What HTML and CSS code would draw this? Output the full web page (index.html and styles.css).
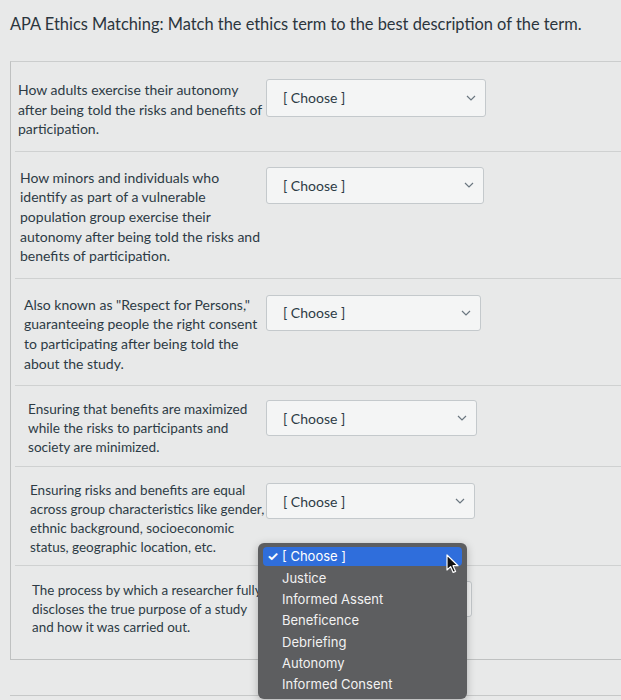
FILE: index.html
```html
<!DOCTYPE html>
<html>
<head>
<meta charset="utf-8">
<link rel="stylesheet" href="styles.css">
</head>
<body>
<div class="page">
  <h1 class="title">APA Ethics Matching: Match the ethics term to the best description of the term.</h1>
  <div class="box">
    <div class="row r1">
      <div class="desc">How adults exercise their autonomy after being told the risks and benefits of participation.</div>
      <div class="select"><span>[ Choose ]</span><svg class="chev" width="10" height="6" viewBox="0 0 10 6"><path d="M1 1l4 4 4-4" fill="none" stroke="#6b7780" stroke-width="1.2"/></svg></div>
    </div>
    <div class="row r2">
      <div class="desc">How minors and individuals who identify as part of a vulnerable population group exercise their autonomy after being told the risks and benefits of participation.</div>
      <div class="select"><span>[ Choose ]</span><svg class="chev" width="10" height="6" viewBox="0 0 10 6"><path d="M1 1l4 4 4-4" fill="none" stroke="#6b7780" stroke-width="1.2"/></svg></div>
    </div>
    <div class="row r3">
      <div class="desc">Also known as "Respect for Persons," guaranteeing people the right consent to participating after being told the about the study.</div>
      <div class="select"><span>[ Choose ]</span><svg class="chev" width="10" height="6" viewBox="0 0 10 6"><path d="M1 1l4 4 4-4" fill="none" stroke="#6b7780" stroke-width="1.2"/></svg></div>
    </div>
    <div class="row r4">
      <div class="desc">Ensuring that benefits are maximized while the risks to participants and society are minimized.</div>
      <div class="select"><span>[ Choose ]</span><svg class="chev" width="10" height="6" viewBox="0 0 10 6"><path d="M1 1l4 4 4-4" fill="none" stroke="#6b7780" stroke-width="1.2"/></svg></div>
    </div>
    <div class="row r5">
      <div class="desc">Ensuring risks and benefits are equal across group characteristics like gender, ethnic background, socioeconomic status, geographic location, etc.</div>
      <div class="select"><span>[ Choose ]</span><svg class="chev" width="10" height="6" viewBox="0 0 10 6"><path d="M1 1l4 4 4-4" fill="none" stroke="#6b7780" stroke-width="1.2"/></svg></div>
    </div>
    <div class="row r6">
      <div class="desc">The process by which a researcher fully discloses the true purpose of a study and how it was carried out.</div>
      <div class="select"><span>[ Choose ]</span><svg class="chev" width="10" height="6" viewBox="0 0 10 6"><path d="M1 1l4 4 4-4" fill="none" stroke="#6b7780" stroke-width="1.2"/></svg></div>
    </div>
  </div>
  <div class="next"></div>
</div>

<div class="menu">
  <div class="opt active"><span class="check">✓</span>[ Choose ]</div>
  <div class="opt">Justice</div>
  <div class="opt">Informed Assent</div>
  <div class="opt">Beneficence</div>
  <div class="opt">Debriefing</div>
  <div class="opt">Autonomy</div>
  <div class="opt">Informed Consent</div>
</div>

<svg class="cursor" width="14" height="20" viewBox="0 0 14 20">
  <path d="M1 1v15l3.6-3.4 2.6 5.8 2.4-1-2.6-5.7H12z" fill="#111" stroke="#fff" stroke-width="1.2" stroke-linejoin="round"/>
</svg>
</body>
</html>
```

FILE: styles.css
```css
html, body {
  margin: 0;
  padding: 0;
}
body {
  background: #e8e9e9;
  font-family: Lato, "Open Sans", sans-serif;
  color: #2d3b45;
  width: 621px;
  height: 700px;
  overflow: hidden;
  position: relative;
}
.page {
  padding: 13px 0 0 10px;
}
.title {
  margin: 0;
  font-size: 16.4px;
  font-weight: 400;
  line-height: 22px;
  color: #2b353d;
}
.box {
  margin-top: 26px;
  border-top: 1px solid #cbcdcd;
  border-left: 1px solid #bfc1c1;
  border-bottom: 1px solid #bfc1c1;
}
.row {
  display: flex;
  align-items: flex-start;
  margin-left: 4px;
  padding: 16px 0 12px 6px;
  border-bottom: 1px solid #cfd1d1;
}
.row:last-child {
  border-bottom: none;
}
.r1 { padding-top: 18px; padding-left: 3px; }
.r2 { padding-left: 5px; }
.r3 { padding-left: 9px; }
.r4 { padding: 14px 0 9px 13px; }
.r5 { padding: 14px 0 8px 15px; }
.r6 { padding: 15px 0 22px 17px; }
.desc {
  font-size: 14px;
  line-height: 19.6px;
  color: #2d3b45;
  flex: 1 1 auto;
  max-width: 250px;
}
.r2 .desc { max-width: 241px; }
.r3 .desc { max-width: 234px; }
.r4 .desc { max-width: 225px; font-size: 13.6px; line-height: 19px; }
.r5 .desc { max-width: 236px; font-size: 13.5px; line-height: 19px; }
.r6 .desc { max-width: 233px; font-size: 13.4px; line-height: 18.5px; }
.select {
  flex: 0 0 auto;
  margin-left: auto;
  margin-right: 135px;
  width: 220px;
  height: 36px;
  box-sizing: border-box;
  border: 1px solid #c4c9cc;
  border-radius: 3px;
  background: #f4f5f5;
  display: flex;
  align-items: center;
  justify-content: space-between;
  padding: 0 9px 0 16px;
  font-size: 14px;
  color: #2d3b45;
  margin-top: 0;
}
.r1 .select { height: 38px; margin-top: -1px; }
.r1 .select span { margin-top: -2px; }
.r2 .select { margin-right: 137px; width: 218px; margin-top: -1px; height: 37px; }
.r3 .select { margin-right: 140px; width: 215px; }
.r4 .select { margin-right: 144px; width: 211px; }
.r5 .select { margin-right: 146px; width: 209px; margin-top: 2px; }
.r6 .select { margin-right: 149px; width: 206px; }
.chev { flex: 0 0 auto; }
.next {
  margin-top: 35px;
  border-top: 1px solid #c6c8c8;
}
.menu {
  position: absolute;
  left: 258px;
  top: 543px;
  width: 209px;
  height: 156px;
  box-sizing: border-box;
  background: #5d5e60;
  border-radius: 6px;
  padding: 4px 5px;
  font-family: Inter, "Liberation Sans", sans-serif;
  font-size: 13px;
  color: #f2f2f2;
  box-shadow: 0 2px 8px rgba(0,0,0,0.25);
}
.opt {
  height: 21.2px;
  line-height: 21px;
  padding-left: 19px;
  position: relative;
  white-space: nowrap;
}
.opt.active {
  background: #2f6edc;
  border-radius: 4px;
  height: 19px;
  line-height: 19px;
  margin-bottom: 2px;
  color: #fff;
}
.check {
  position: absolute;
  left: 4px;
  top: 0;
  font-size: 13px;
  font-weight: 700;
}
.cursor {
  position: absolute;
  left: 446px;
  top: 554px;
}
```
